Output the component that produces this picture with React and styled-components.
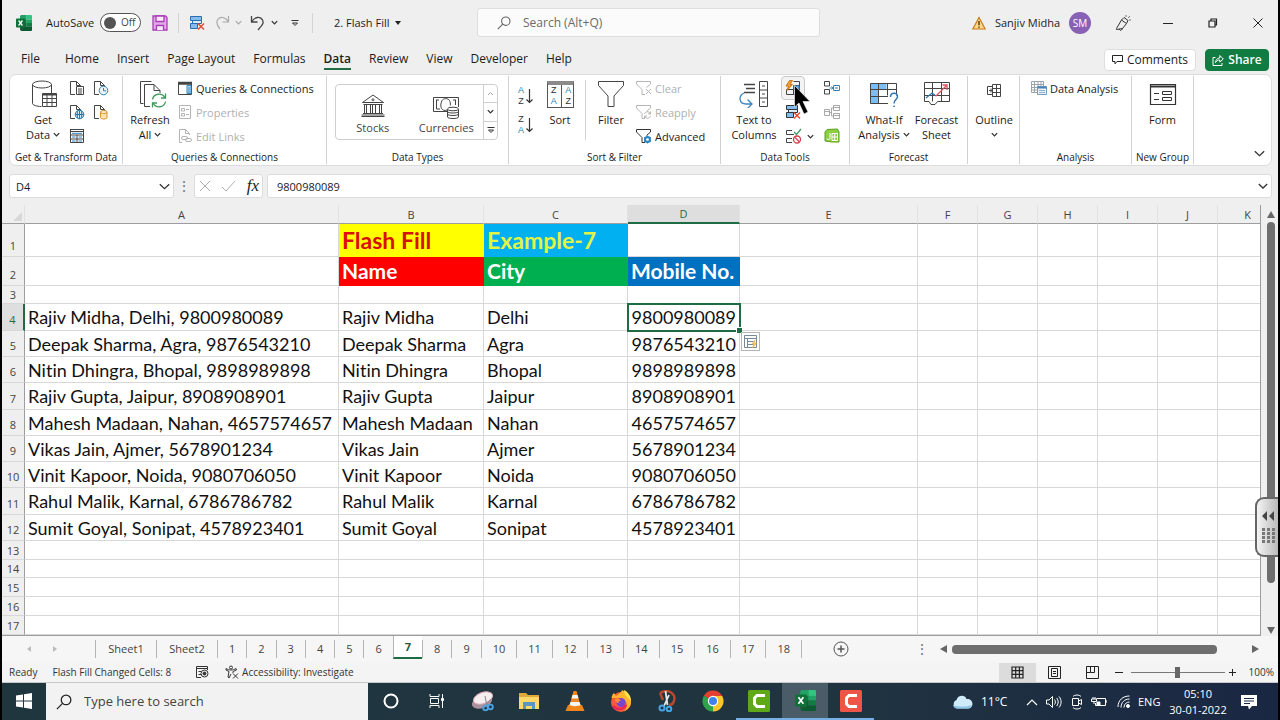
import * as React from "react";
import styled, { createGlobalStyle, css } from "styled-components";

const ui = `"Open Sans", "Noto Sans", sans-serif`;
const calc = `Lato, "Open Sans", sans-serif`;

//
// --- Data ---
const menuTabs = [
  "Home",
  "Insert",
  "Page Layout",
  "Formulas",
  "Data",
  "Review",
  "View",
  "Developer",
  "Help"
];

const columns = [
  { name: "A", width: 314 },
  { name: "B", width: 145 },
  { name: "C", width: 144 },
  { name: "D", width: 112 },
  { name: "E", width: 178 },
  { name: "F", width: 60 },
  { name: "G", width: 60 },
  { name: "H", width: 60 },
  { name: "I", width: 60 },
  { name: "J", width: 60 },
  { name: "K", width: 60 }
];

const rowHeights = [
  33, 29, 18, 27, 26, 26, 27, 26, 26, 26, 27, 26, 19, 18, 19, 19, 19
];

const people = [
  ["Rajiv Midha", "Delhi", "9800980089"],
  ["Deepak Sharma", "Agra", "9876543210"],
  ["Nitin Dhingra", "Bhopal", "9898989898"],
  ["Rajiv Gupta", "Jaipur", "8908908901"],
  ["Mahesh Madaan", "Nahan", "4657574657"],
  ["Vikas Jain", "Ajmer", "5678901234"],
  ["Vinit Kapoor", "Noida", "9080706050"],
  ["Rahul Malik", "Karnal", "6786786782"],
  ["Sumit Goyal", "Sonipat", "4578923401"]
];

const cells = {
  B1: { text: "Flash Fill", fill: "#ffff00", color: "#d8100c", size: 23 },
  C1: { text: "Example-7", fill: "#00b0f0", color: "#e4f442", size: 23 },
  B2: { text: "Name", fill: "#ff0000", color: "#ffffff", size: 21 },
  C2: { text: "City", fill: "#00b050", color: "#ffffff", size: 21 },
  D2: { text: "Mobile No.", fill: "#0070c0", color: "#ffffff", size: 21 }
};
people.forEach(([name, city, mobile], i) => {
  const row = i + 4;
  cells[`A${row}`] = { text: `${name}, ${city}, ${mobile}` };
  cells[`B${row}`] = { text: name };
  cells[`C${row}`] = { text: city };
  cells[`D${row}`] = { text: mobile, right: true };
});

const sheets = ["Sheet1", "Sheet2"].concat(
  Array.from({ length: 18 }, (_, i) => String(i + 1))
);

//
// --- Global ---
const GlobalStyle = createGlobalStyle`
  * { box-sizing: border-box; }
  body { margin: 0; background: #000; }
  button, input {
    margin: 0;
    padding: 0;
    border: 0;
    background: none;
    color: inherit;
    font: inherit;
  }
  svg { display: block; flex: none; }
`;

const StyledApp = styled.div`
  display: flex;
  flex-direction: column;
  min-height: 100vh;
  border: solid #000;
  border-width: 0 2px;
  background: #efefef;
  color: #1c1c1c;
  font: 11px/15px ${ui};
  white-space: nowrap;
`;

//
// --- Icons ---
const Svg = ({ w = 16, h = 16, color = "#444", sw = 1, children }) => (
  <svg
    width={w}
    height={h}
    viewBox={`0 0 ${w} ${h}`}
    fill="none"
    stroke={color}
    strokeWidth={sw}
    aria-hidden="true"
  >
    {children}
  </svg>
);

const Chevron = ({ w = 7, color = "#333", sw = 1.3 }) => (
  <Svg w={w} h={w} color={color} sw={sw}>
    <path d={`M.8 ${w * 0.3}L${w / 2} ${w * 0.7}L${w - 0.8} ${w * 0.3}`} />
  </Svg>
);

const ExcelLogo = ({ size = 16 }) => (
  <svg width={size} height={size} viewBox="0 0 16 16" aria-hidden="true">
    <path d="M5 0h5.5v8H4V1z" fill="#21a366" />
    <path d="M10.300 0H15a1 1 0 0 1 1 1v3.500h-5.700z" fill="#33c481" />
    <path d="M4 4.500h6.300V8H4z" fill="#107c41" />
    <path d="M10.300 4.500H16V8h-5.700z" fill="#21a366" />
    <path d="M4 8h6.300v7.500H5a1 1 0 0 1-1-1z" fill="#185c37" />
    <path d="M10.300 8H16v3.800h-5.700z" fill="#107c41" />
    <path d="M10.300 11.800H16V15a1 1 0 0 1-1 1H4.500z" fill="#0c5a31" />
    <rect y="3.500" width="9" height="9" rx=".8" fill="#0f7038" />
    <path d="M2.600 5.500l3.800 5M6.400 5.500l-3.800 5" stroke="#fff" strokeWidth="1.300" />
  </svg>
);

const SearchIcon = ({ size = 14, color = "#666" }) => (
  <svg
    width={size}
    height={size}
    viewBox="0 0 14 14"
    fill="none"
    stroke={color}
    strokeWidth="1.100"
    aria-hidden="true"
  >
    <circle cx="8.800" cy="5.200" r="4.200" />
    <path d="M5.700 8.200L.8 13.200" />
  </svg>
);

const SaveIcon = () => (
  <Svg color="#a83fb5" sw={1.3}>
    <path d="M1 1h12.500L15 2.500V15H1z" fill="#e3a6ea" />
    <path d="M4 1h8v5.500H4zM4.500 15v-4.500h7V15" fill="#fbeafc" />
  </Svg>
);

const DeleteRowsIcon = ({ bar = "#2a6eb0" }) => (
  <Svg>
    <path d="M1.500 1.500h11v4h-11z" fill="#83bdf0" stroke={bar} />
    <path d="M3.500 5.500h9v3h-9z" fill="#d8ecfb" stroke={bar} />
    <path d="M1.500 8.500h7v5h-7z" fill="#83bdf0" stroke={bar} />
    <path d="M9 8.500l6 6M15 8.500l-6 6" stroke="#e0492f" strokeWidth="1.400" />
  </Svg>
);

const RedoIcon = () => (
  <Svg w={15} color="#aaa" sw={1.2}>
    <path d="M13.500 1v6h-6M13.200 6.500C10 1.500 5 1.500 2.800 4.500.8 7.500 2 10.500 5 14" />
  </Svg>
);

const UndoIcon = () => (
  <Svg w={15} color="#444" sw={1.3}>
    <path d="M1.500 1v6h6M1.800 6.500C5 1.500 10 1.500 12.200 4.500c2 3 .8 5-4.200 10.500" />
  </Svg>
);

const CustomizeIcon = () => (
  <Svg w={8} h={8} color="#333">
    <path d="M.5 1.500h7M1.500 4l2.500 2.500L6.500 4z" />
  </Svg>
);

const WarningIcon = () => (
  <Svg w={14} h={14} color="#c77b16" sw={1.2}>
    <path d="M7 1.500L13.200 13H.8z" fill="#ffd68a" />
    <path d="M7 5v4.200M7 10.500v1.300" stroke="#4d3305" strokeWidth="1.400" />
  </Svg>
);

const PenIcon = () => (
  <Svg w={16} color="#333">
    <path d="M1.500 13.500L6.500 5l5 3.500-4 5-6 1zM6.500 5L9 2.500l4 3-1.500 3M4 14l1.500 1.500L8 13.500" />
    <path d="M11 2V0M13 3l2-2M14 5h2" stroke="#777" />
  </Svg>
);

const CommentIcon = () => (
  <Svg w={11} h={11} color="#222">
    <path d="M.5 1.500h10v6H5L3 9.800V7.500H.5z" />
  </Svg>
);

const ShareIcon = () => (
  <Svg w={12} h={12} color="#fff">
    <path d="M3.500 3.500H1v8h9V9M3.500 8.500C4 5.500 5.500 4 7.800 4V1.500L11.300 5 7.800 8V6C6 6 4.500 6.800 3.500 8.500z" />
  </Svg>
);

const GetDataIcon = () => (
  <Svg w={32} h={28}>
    <g transform="translate(4)">
      <path d="M1.500 4.500v19c0 1.500 4 3 9 3M20.500 4.500v9" />
      <ellipse cx="11" cy="4.500" rx="9.500" ry="3.500" />
      <path d="M11.500 13.500h14v13h-14z" fill="#fff" />
      <path d="M11.500 14.500h14" strokeWidth="2" />
      <path d="M11.500 18.500h14M11.500 22.500h14M16 14v12.500M21 14v12.500" />
    </g>
  </Svg>
);

const FileIcon = ({ children }) => (
  <Svg>
    <path d="M6 14.500H1.500v-13h6l4 4V7M7.500 1.500v4h4" />
    {children}
  </Svg>
);

const TextFileIcon = () => (
  <FileIcon>
    <path d="M7.500 6.500h7v8h-7z" fill="#fff" />
    <path d="M9 9h4M9 11h4M9 13h4" />
  </FileIcon>
);

const RecentFileIcon = () => (
  <FileIcon>
    <circle cx="10.500" cy="10.500" r="4.300" fill="#e8f3fb" stroke="#2b83bf" />
    <path d="M10.500 8v2.800h2.500" stroke="#2b83bf" />
  </FileIcon>
);

const WebFileIcon = () => (
  <FileIcon>
    <circle cx="10.500" cy="10.500" r="4.300" fill="#cfe6f6" stroke="#1f78b8" />
    <path d="M6.300 10.500h8.400M10.500 6.200v8.600M8.300 7v7M12.700 7v7" stroke="#1f78b8" />
  </FileIcon>
);

const SourceFileIcon = () => (
  <FileIcon>
    <path d="M7.500 8v5.500c0 2 6.500 2 6.500 0V8" fill="#ffe3ae" stroke="#d9912a" />
    <ellipse cx="10.750" cy="8" rx="3.300" ry="1.500" fill="#fff1d6" stroke="#d9912a" />
  </FileIcon>
);

const TableIcon = () => (
  <Svg>
    <path d="M1 1.500h14M1 3.500h14" strokeWidth="1.200" />
    <path d="M1.500 1.500v13h13v-13M1.500 7h13M1.500 11h13M8 7v7.500" />
    <path d="M3 5.300h10M3 9h3.500M9.500 9H13M3 13h3.500M9.500 13H13" stroke="#2f87c4" />
  </Svg>
);

const RefreshIcon = () => (
  <Svg w={34} h={28}>
    <g transform="translate(6)">
      <path d="M4.500 23.500h-3v-22h11M11 26.500H5.500v-22H15l6 6V13M15 4.500v6h6" />
      <g stroke="#3e9a5b" strokeWidth="1.300">
        <path d="M13.500 19.500c1-6 9.500-7.500 12.500-1.500M26.500 21.500c-1 6-9.500 7.500-12.500 1.500" />
        <path d="M26.500 13.500V18H22M13.500 27.500V23H18" />
      </g>
    </g>
  </Svg>
);

const QueriesIcon = () => (
  <Svg>
    <path d="M1.500 2.500h13v12h-13z" />
    <path d="M1 2.500h14M1 4h14" strokeWidth="1.500" />
    <path d="M10 5.500h4v8h-4z" fill="#bfdff5" stroke="#2f87c4" />
    <path d="M11 8h2M11 10h2M11 12h2" stroke="#2f87c4" />
  </Svg>
);

const PropertiesIcon = () => (
  <Svg color="#b5b5b5">
    <path d="M2.500 1.500h11v13h-11z" />
    <path d="M4.500 4.500h3v2.500h-3zM4.500 9.500h3V12h-3zM9 5.500h3M9 10.500h3" />
  </Svg>
);

const EditLinksIcon = () => (
  <Svg color="#b5b5b5">
    <path d="M5 14.500H2.500v-13h6l4 4V7M8.500 1.500v4h4" />
    <rect x="4.500" y="8.500" width="6" height="3" rx="1.500" />
    <rect x="8.500" y="10.500" width="6" height="3" rx="1.500" />
  </Svg>
);

const BankIcon = () => (
  <Svg w={26} h={26}>
    <path d="M2.500 9.500L13 2l10.500 7.500zM3.500 11.500h19M3 20.500h20M1.500 23.500h23M1.500 22h23" />
    <path d="M4.500 11.500v9M6.500 11.500v9M10.500 11.500v9M12.500 11.500v9M15.500 11.500v9M19.500 11.500v9M21.500 11.500v9" />
    <circle cx="13" cy="6.800" r="1" />
  </Svg>
);

const CurrencyIcon = () => (
  <Svg w={28} h={26}>
    <path d="M1.500 4.500h25V14M1.500 4.500v14H15M4 7h3M21 7h3M4.500 7v9H8M23.500 7v5" />
    <path d="M15 17c-5 2-8-3-5-9.500 1.500-2.500 6-2.500 7.500 0 .8 1.500 1 3 .8 5" />
    <path d="M15.500 16v8c0 2 11 2 11 0v-8" fill="#fff" />
    <ellipse cx="21" cy="16" rx="5.500" ry="1.800" fill="#fff" />
    <path d="M15.500 18.500c0 2 11 2 11 0M15.500 21c0 2 11 2 11 0" />
  </Svg>
);

const StyledLetters = styled.span`
  display: flex;
  flex-direction: column;
  color: #333;
  font: 9px/11px "Liberation Sans", sans-serif;

  b {
    font-weight: 400;
    color: #2785ab;
  }
`;

const SortLetters = ({ down }) => (
  <>
    <StyledLetters>
      {down ? <span>Z</span> : <b>A</b>}
      {down ? <b>A</b> : <span>Z</span>}
    </StyledLetters>
    <Svg w={8} h={16} color="#333" sw={1.2}>
      <path d="M4.500 1v13.500M1.500 11.500l3 3 3-3" />
    </Svg>
  </>
);

const StyledSortBox = styled.span`
  display: grid;
  grid-template-columns: 1fr 1fr;
  width: 27px;
  height: 27px;
  border: 1px solid #555;
  border-top: 4px solid #8b8b8b;
  justify-items: center;
  align-items: center;

  ${StyledLetters} + ${StyledLetters} {
    border-left: 1px solid #555;
    padding-left: 3px;
  }
`;

const FilterIcon = () => (
  <Svg w={28} h={28}>
    <path d="M1.500 1.500h25v4L17 16v10.500h-6V16L1.500 5.500z" />
  </Svg>
);

const SmallFilterIcon = ({ color = "#b5b5b5", children }) => (
  <Svg color={color}>
    <path d="M10.500 7.500l4-3.500V1.500h-14V4L6 9.500v5h3" />
    {children}
  </Svg>
);

const TextToColumnsIcon = () => (
  <Svg w={30} h={28}>
    <path d="M5 4.500h11M7 8.500h9M5 12.500h11" strokeWidth="1.300" />
    <path d="M20.500 1.500h8v25h-8zM20.500 10h8M20.500 18h8M23 6h3M23 14h3M23 22h3" />
    <path d="M5 13c-6 3-5 11 2 11h5M8.500 19.500l4.500 4.500-4.500 4.500" stroke="#3b86c4" strokeWidth="1.300" />
  </Svg>
);

const FlashFillIcon = () => (
  <Svg>
    <path d="M8.500 1.500h6v13h-13v-5M1.500 9.500h13M8.500 5.500v9M8.500 5.500h6" />
    <path d="M9 6h5v3H9z" fill="#72b2ea" stroke="#2f87c4" />
    <path d="M4.500.5L1 6h2.500L2 10.500 7.500 4.500H5L7.500.5z" fill="#f0a13c" stroke="#d07512" />
  </Svg>
);

const ValidationIcon = () => (
  <Svg w={17}>
    <path d="M7 2.500H1.500v4H9M7 10.500H1.500v4H7" />
    <path d="M9 4l2.500 2.500L16 1" stroke="#3e9a5b" strokeWidth="1.200" />
    <circle cx="12" cy="11.500" r="3.500" stroke="#d6404d" strokeWidth="1.300" />
    <path d="M9.500 9l5 5" stroke="#d6404d" strokeWidth="1.300" />
  </Svg>
);

const ConsolidateIcon = () => (
  <Svg>
    <path d="M.5 1.500h5v4.500h-5zM.5 9.500h5V14h-5z" />
    <path d="M5.500 8H9M7.500 6.500L9 8 7.500 9.500" stroke="#2f87c4" />
    <path d="M9.500 5.500h6v5h-6zM11 8h3" stroke="#2f87c4" />
  </Svg>
);

const RelationsIcon = () => (
  <Svg color="#a8a8a8">
    <path d="M.5 5.500h5v6h-5zM9.500 1.500h6v5h-6zM9.500 9.500h6v5h-6zM5.500 8.500h2M7.500 4v8M7.500 4h2M7.500 12h2M9.500 3.500h6M9.500 11.500h6M.5 7.500h5" />
  </Svg>
);

const DataModelIcon = () => (
  <Svg>
    <path d="M3 1.500L13.500 1 15 4v10H8L1 13V4z" fill="#8bcf45" stroke="#5f9e22" />
    <path d="M6 5v5c0 2-3 2-3 .5M8 5.500h5.500v7H8zM8 9h5.500M10.700 5.500v7" stroke="#fff" />
  </Svg>
);

const WhatIfIcon = () => (
  <Svg w={30} h={28}>
    <path d="M1.500 3.500h8v20h-8zM9.500 3.500h8v6h-8z" fill="#7ebdf2" stroke="none" />
    <path d="M1.500 3.500h26v12M1.500 3.500v20H19M1.500 9.500h26M1.500 16.500H19M9.500 3.500v20M18.500 3.500v12" />
    <path d="M21.500 17c0-5 7-5 7-.5 0 3-3.500 3-3.500 7M25 25.500v1.500" stroke="#2f78b8" strokeWidth="1.500" />
  </Svg>
);

const ForecastIcon = () => (
  <Svg w={28} h={28}>
    <path d="M1.500 2.500h25v19h-12l-2.500 3h-4l-2-3H1.500zM1.500 8.500h25M1.500 15.500h25M9.500 2.500v19M18.500 2.500v19" />
    <path d="M3 18l6-5 4 3" stroke="#2f78b8" strokeWidth="1.300" />
    <path d="M13 16l11-11M19.500 5H24v5" stroke="#dc5361" strokeWidth="1.300" />
  </Svg>
);

const OutlineIcon = () => (
  <Svg h={24}>
    <path d="M6.500 2.500h8v12h-8zM6.500 6.500h8M6.500 10.500h8M10.500 2.500v12M6 4.500H1.500v8H6M3 8.500h4M5 6.500v4" />
  </Svg>
);

const DataAnalysisIcon = () => (
  <Svg color="#9aa4ad">
    <path d="M.5 1.500h12v11H.5zM.5 4.500h12M.5 7.500h12M.5 10h12M3.500 1.500v11M7 1.500v11M10 1.500v11" />
    <path d="M6.500 6.500h9v8h-9z" fill="#e9f2fa" stroke="#6f9dc4" />
    <path d="M6.500 7.500h9" stroke="#4d83b3" strokeWidth="2" />
    <path d="M8 10.500h6M8 12.500h6" stroke="#8eb3d2" />
  </Svg>
);

const FormIcon = () => (
  <Svg w={28} h={24} color="#333">
    <path d="M1.500 2.500h25v20h-25z" strokeWidth="1.200" />
    <path d="M1 4.500h26" strokeWidth="2" />
    <path d="M5 11.500h5M5 17.500h5M13.500 9.500h9v3h-9zM13.500 15.500h9v3h-9z" />
  </Svg>
);

//
// --- Title bar ---
const StyledTitleBar = styled.header`
  display: flex;
  align-items: center;
  height: 45px;
`;

const StyledTitleLeft = styled.div`
  display: flex;
  align-items: center;
  flex: 0 0 475px;
  padding-left: 14px;
`;

const StyledTitleRight = styled.div`
  display: flex;
  flex: 1;
  align-items: center;
  justify-content: flex-end;
`;

const StyledSlot = styled.div`
  width: ${props => props.$width}px;
`;

const StyledIconButton = styled.button`
  display: flex;
  align-items: center;
  justify-content: center;
  width: ${props => props.$width || 24}px;
  height: ${props => props.$height || 24}px;
`;

const StyledRule = styled.span`
  width: 1px;
  height: ${props => props.$height}px;
  background: #d4d4d4;
`;

const StyledToggle = styled.label`
  display: flex;
  align-items: center;

  span {
    width: 54px;
  }
`;

const StyledToggleBox = styled.input`
  appearance: none;
  display: flex;
  align-items: center;
  gap: 5px;
  width: 41px;
  height: 19px;
  padding: 0 3px;
  border: 1px solid #555;
  border-radius: 10px;
  background: #fff;

  &::before {
    content: "";
    width: 12px;
    height: 12px;
    border-radius: 50%;
    background: #555;
  }

  &::after {
    content: "Off";
    font-size: 10px;
    color: #444;
  }
`;

const StyledDocTitle = styled.button`
  display: flex;
  align-items: center;
  gap: 6px;
  padding-left: 21px;
  font-size: 11px;
`;

const StyledSearch = styled.label`
  display: flex;
  align-items: center;
  gap: 12px;
  flex: 0 1 343px;
  height: 29px;
  padding: 0 19px;
  border: 1px solid #dedede;
  border-radius: 3px;
  background: #fbfbfb;

  input {
    flex: 1;
    min-width: 0;
    font-size: 12px;
    outline: 0;
  }

  input::placeholder {
    color: #6a6a6a;
    opacity: 1;
  }
`;

const StyledUser = styled.button`
  display: flex;
  align-items: center;
  gap: 9px;
`;

const StyledAvatar = styled.span`
  width: 22px;
  height: 22px;
  border-radius: 50%;
  background: #8661b5;
  color: #fff;
  font-size: 10px;
  line-height: 22px;
  text-align: center;
`;

const StyledWindowButtons = styled.div`
  display: flex;
  gap: 5px;
  padding-left: 12px;
`;

const TitleBar = () => (
  <StyledTitleBar>
    <StyledTitleLeft>
      <StyledSlot $width={30}>
        <ExcelLogo />
      </StyledSlot>
      <StyledToggle>
        <span>AutoSave</span>
        <StyledToggleBox type="checkbox" />
      </StyledToggle>
      <StyledIconButton $width={37} aria-label="Save">
        <SaveIcon />
      </StyledIconButton>
      <StyledRule $height={20} />
      <StyledIconButton $width={35} aria-label="Delete rows">
        <DeleteRowsIcon />
      </StyledIconButton>
      <StyledIconButton $width={17} aria-label="Redo">
        <RedoIcon />
      </StyledIconButton>
      <StyledIconButton $width={14} aria-label="Redo list">
        <Chevron color="#aaa" />
      </StyledIconButton>
      <StyledIconButton $width={25} aria-label="Undo">
        <UndoIcon />
      </StyledIconButton>
      <StyledIconButton $width={8} aria-label="Undo list">
        <Chevron />
      </StyledIconButton>
      <StyledIconButton $width={34} aria-label="Customize toolbar">
        <CustomizeIcon />
      </StyledIconButton>
      <StyledRule $height={20} />
      <StyledDocTitle>
        2. Flash Fill
        <Svg w={6} h={4}>
          <path d="M0 0h6L3 4z" fill="#222" stroke="none" />
        </Svg>
      </StyledDocTitle>
    </StyledTitleLeft>
    <StyledSearch>
      <SearchIcon />
      <input type="search" placeholder="Search (Alt+Q)" aria-label="Search" />
    </StyledSearch>
    <StyledTitleRight>
      <StyledUser>
        <WarningIcon />
        Sanjiv Midha
        <StyledAvatar>SM</StyledAvatar>
      </StyledUser>
      <StyledWindowButtons>
        <StyledIconButton $width={40} aria-label="Coming soon">
          <PenIcon />
        </StyledIconButton>
        <StyledIconButton $width={40} aria-label="Minimize">
          <Svg w={10} h={10} color="#222">
            <path d="M0 5.500h10" />
          </Svg>
        </StyledIconButton>
        <StyledIconButton $width={40} aria-label="Restore">
          <Svg w={10} h={10} color="#222" sw={1.2}>
            <path d="M1 3h6v6H1zM3 3V1h5.500v6H7" />
          </Svg>
        </StyledIconButton>
        <StyledIconButton $width={40} aria-label="Close">
          <Svg w={10} h={10} color="#222">
            <path d="M.5.5l9 9M9.500.5l-9 9" />
          </Svg>
        </StyledIconButton>
      </StyledWindowButtons>
    </StyledTitleRight>
  </StyledTitleBar>
);

//
// --- Menu tabs ---
const StyledMenu = styled.nav`
  display: flex;
  align-items: center;
  height: 29px;
  padding: 0 9px 0 10px;
  font-size: 12px;
`;

const StyledMenuTab = styled.button`
  height: 21px;
  margin: 0 9px;
  border-bottom: 2px solid ${props => (props.$active ? "#1e6b44" : "transparent")};
  font-weight: ${props => (props.$active ? 600 : 400)};
  line-height: 19px;
`;

const StyledFileTab = styled(StyledMenuTab)`
  margin-right: 16px;
`;

const StyledSpacer = styled.div`
  flex: 1;
`;

const StyledPill = styled.button`
  display: flex;
  align-items: center;
  justify-content: center;
  gap: 4px;
  height: 22px;
  min-width: ${props => (props.$green ? 64 : 92)}px;
  margin-left: 9px;
  border: 1px solid ${props => (props.$green ? "#107c41" : "#dedede")};
  border-radius: 4px;
  background: ${props => (props.$green ? "#107c41" : "#fff")};
  color: ${props => (props.$green ? "#fff" : "#1c1c1c")};
  font-weight: ${props => (props.$green ? 600 : 400)};
`;

const Menu = () => (
  <StyledMenu>
    <StyledFileTab>File</StyledFileTab>
    {menuTabs.map(tab => (
      <StyledMenuTab key={tab} $active={tab === "Data"}>
        {tab}
      </StyledMenuTab>
    ))}
    <StyledSpacer />
    <StyledPill>
      <CommentIcon />
      Comments
    </StyledPill>
    <StyledPill $green>
      <ShareIcon />
      Share
    </StyledPill>
  </StyledMenu>
);

//
// --- Ribbon ---
const StyledRibbon = styled.section`
  display: flex;
  height: 92px;
  margin: 0 6px 0 7px;
  padding-top: 1px;
  border: 1px solid #dcdcdc;
  border-radius: 7px;
  background: #fff;
`;

const StyledGroup = styled.div`
  display: flex;
  flex-direction: column;
  flex: 0 0 ${props => props.$width}px;
  height: 88px;
  border-right: 1px solid #d2d2d2;
`;

const StyledGroupBody = styled.div`
  display: flex;
  flex: 1;
  padding-left: ${props => props.$left || 0}px;
`;

const StyledCaption = styled.div`
  font-size: 10px;
  font-weight: 500;
  line-height: 14px;
  text-align: center;
`;

const StyledBigButton = styled.button`
  display: flex;
  flex-direction: column;
  align-items: center;
  align-self: flex-start;
  width: ${props => props.$width}px;
  padding-top: 4px;
  line-height: 15px;
`;

const StyledBigIcon = styled.span`
  display: flex;
  align-items: center;
  height: 28px;
  margin-bottom: 4px;
`;

const StyledLine = styled.span`
  display: flex;
  align-items: center;
  gap: 3px;
`;

const StyledList = styled.div`
  display: flex;
  flex-direction: column;
  padding-left: ${props => props.$left}px;
`;

const StyledListButton = styled.button`
  display: flex;
  align-items: center;
  gap: 3px;
  height: 24px;
  color: ${props => (props.$muted ? "#b0b0b0" : "#1c1c1c")};
`;

const StyledIconGrid = styled.div`
  display: grid;
  grid-template-columns: ${props => props.$columns};
  grid-auto-rows: 24px;
  align-items: center;
  justify-items: center;
`;

const StyledGallery = styled.div`
  display: flex;
  width: 163px;
  height: 56px;
  margin: 8px 0 0 8px;
  border: 1px solid #cfcfcf;
  border-radius: 4px;
  color: #444;
`;

const StyledGalleryItem = styled.button`
  display: flex;
  flex: 1;
  flex-direction: column;
  align-items: center;
  gap: 1px;
  padding-top: 8px;
`;

const StyledGallerySide = styled.div`
  display: flex;
  flex-direction: column;
  border-left: 1px solid #cfcfcf;

  button {
    display: flex;
    flex: 1;
    align-items: center;
    justify-content: center;
    width: 13px;
  }

  button + button {
    border-top: 1px solid #cfcfcf;
  }
`;

const StyledSortColumn = styled.div`
  display: flex;
  flex-direction: column;
  padding-top: 5px;
`;

const StyledSortButton = styled.button`
  display: flex;
  align-items: center;
  gap: 1px;
  width: 20px;
  height: 29px;
`;

const StyledDivider = styled.span`
  width: 1px;
  height: 60px;
  margin: 4px 2px 0 3px;
  background: #d2d2d2;
`;

const StyledFlashFill = styled(StyledIconButton)`
  position: relative;
  border: 1px solid #c9c9c9;
  border-radius: 4px;
  background: #f3f3f3;
`;

const StyledPointer = styled.span`
  position: absolute;
  z-index: 2;
  left: 12px;
  top: 8px;
`;

const StyledOutlineArrow = styled.span`
  padding-top: 4px;
`;

const StyledRibbonEnd = styled.div`
  display: flex;
  flex: 1;
  align-items: flex-end;
  justify-content: flex-end;
  padding: 0 6px 6px 0;
`;

const BigButton = ({ width, icon, lines, arrow }) => (
  <StyledBigButton $width={width}>
    <StyledBigIcon>{icon}</StyledBigIcon>
    {lines.map((line, i) => (
      <StyledLine key={line}>
        {line}
        {arrow && i === lines.length - 1 && <Chevron />}
      </StyledLine>
    ))}
  </StyledBigButton>
);

const Group = ({ width, left, caption, children }) => (
  <StyledGroup $width={width}>
    <StyledGroupBody $left={left}>{children}</StyledGroupBody>
    <StyledCaption>{caption}</StyledCaption>
  </StyledGroup>
);

const GridButton = ({ label, children }) => (
  <StyledIconButton aria-label={label}>{children}</StyledIconButton>
);

const Ribbon = () => (
  <StyledRibbon>
    <Group width={113} left={11} caption="Get & Transform Data">
      <BigButton width={44} icon={<GetDataIcon />} lines={["Get", "Data"]} arrow />
      <StyledIconGrid $columns="24px 24px">
        <GridButton label="From text"><TextFileIcon /></GridButton>
        <GridButton label="Recent sources"><RecentFileIcon /></GridButton>
        <GridButton label="From web"><WebFileIcon /></GridButton>
        <GridButton label="Existing connections"><SourceFileIcon /></GridButton>
        <GridButton label="From table"><TableIcon /></GridButton>
      </StyledIconGrid>
    </Group>
    <Group width={204} left={4} caption="Queries & Connections">
      <BigButton width={46} icon={<RefreshIcon />} lines={["Refresh", "All"]} arrow />
      <StyledList $left={4}>
        <StyledListButton><QueriesIcon />Queries & Connections</StyledListButton>
        <StyledListButton $muted><PropertiesIcon />Properties</StyledListButton>
        <StyledListButton $muted><EditLinksIcon />Edit Links</StyledListButton>
      </StyledList>
    </Group>
    <Group width={182} caption="Data Types">
      <StyledGallery>
        <StyledGalleryItem><BankIcon />Stocks</StyledGalleryItem>
        <StyledGalleryItem><CurrencyIcon />Currencies</StyledGalleryItem>
        <StyledGallerySide>
          <button aria-label="Previous">
            <Svg w={7} h={7} color="#aaa"><path d="M1 5l2.500-2.500L6 5" /></Svg>
          </button>
          <button aria-label="Next"><Chevron /></button>
          <button aria-label="More"><CustomizeIcon /></button>
        </StyledGallerySide>
      </StyledGallery>
    </Group>
    <Group width={212} left={9} caption="Sort & Filter">
      <StyledSortColumn>
        <StyledSortButton aria-label="Sort A to Z"><SortLetters /></StyledSortButton>
        <StyledSortButton aria-label="Sort Z to A"><SortLetters down /></StyledSortButton>
      </StyledSortColumn>
      <BigButton
        width={44}
        icon={
          <StyledSortBox>
            <StyledLetters><span>Z</span><b>A</b></StyledLetters>
            <StyledLetters><b>A</b><span>Z</span></StyledLetters>
          </StyledSortBox>
        }
        lines={["Sort"]}
      />
      <StyledDivider />
      <BigButton width={46} icon={<FilterIcon />} lines={["Filter"]} />
      <StyledList $left={2}>
        <StyledListButton $muted>
          <SmallFilterIcon><path d="M10 9l5 5M15 9l-5 5" /></SmallFilterIcon>
          Clear
        </StyledListButton>
        <StyledListButton $muted>
          <SmallFilterIcon>
            <path d="M8.500 10c1-3 5-3 6 0M14.500 7.500V10H12M14.500 12c-1 3-5 3-6 0M8.500 14.500V12H11" />
          </SmallFilterIcon>
          Reapply
        </StyledListButton>
        <StyledListButton>
          <SmallFilterIcon color="#333">
            <circle cx="11.500" cy="11.500" r="2.500" stroke="#2785c4" strokeWidth="2" />
            <path d="M11.500 7.500v8M8 9.500l7 4M15 9.500l-7 4" stroke="#2785c4" />
            <circle cx="11.500" cy="11.500" r="1.200" fill="#fff" stroke="none" />
          </SmallFilterIcon>
          Advanced
        </StyledListButton>
      </StyledList>
    </Group>
    <Group width={129} left={6} caption="Data Tools">
      <BigButton width={54} icon={<TextToColumnsIcon />} lines={["Text to", "Columns"]} />
      <StyledIconGrid $columns="24px 10px 34px">
        <StyledFlashFill aria-label="Flash Fill">
          <FlashFillIcon />
          <StyledPointer>
            <Svg w={18} h={30}>
              <path d="M.5.5v21.500l4.500-4 5 11 4-2-5-10.500h7z" fill="#000" stroke="#fff" strokeWidth=".6" />
            </Svg>
          </StyledPointer>
        </StyledFlashFill>
        <span />
        <GridButton label="Consolidate"><ConsolidateIcon /></GridButton>
        <GridButton label="Remove duplicates"><DeleteRowsIcon bar="#333" /></GridButton>
        <span />
        <GridButton label="Relationships"><RelationsIcon /></GridButton>
        <GridButton label="Data validation"><ValidationIcon /></GridButton>
        <Chevron />
        <GridButton label="Data model"><DataModelIcon /></GridButton>
      </StyledIconGrid>
    </Group>
    <Group width={118} left={8} caption="Forecast">
      <BigButton width={52} icon={<WhatIfIcon />} lines={["What-If", "Analysis"]} arrow />
      <BigButton width={53} icon={<ForecastIcon />} lines={["Forecast", "Sheet"]} />
    </Group>
    <Group width={52} left={2}>
      <StyledBigButton $width={48}>
        <StyledBigIcon><OutlineIcon /></StyledBigIcon>
        Outline
        <StyledOutlineArrow><Chevron /></StyledOutlineArrow>
      </StyledBigButton>
    </Group>
    <Group width={112} left={11} caption="Analysis">
      <StyledListButton><DataAnalysisIcon />Data Analysis</StyledListButton>
    </Group>
    <Group width={62} caption="New Group">
      <BigButton width={61} icon={<FormIcon />} lines={["Form"]} />
    </Group>
    <StyledRibbonEnd>
      <button aria-label="Collapse ribbon"><Chevron w={11} /></button>
    </StyledRibbonEnd>
  </StyledRibbon>
);

//
// --- Formula bar ---
const StyledFormulaBar = styled.div`
  display: flex;
  height: 39px;
  padding: 8px 6px 7px 7px;
`;

const StyledBox = styled.div`
  display: flex;
  align-items: center;
  justify-content: space-between;
  flex: ${props => (props.$width ? `0 0 ${props.$width}px` : 1)};
  padding: 0 3px 0 ${props => props.$left}px;
  border: 1px solid #dcdcdc;
  border-radius: 3px;
  background: #fff;

  input {
    flex: 1;
    min-width: 0;
    outline: 0;
  }
`;

const StyledDots = styled.span`
  width: 20px;
  color: #777;
  font-size: 14px;
  line-height: 24px;
  text-align: center;
`;

const StyledFx = styled.span`
  color: #222;
  font: italic 17px/20px "Liberation Serif", serif;
`;

const StyledGap = styled.span`
  width: 4px;
`;

const FormulaBar = () => (
  <StyledFormulaBar>
    <StyledBox $width={165} $left={6}>
      <input aria-label="Name box" defaultValue="D4" />
      <button aria-label="Names"><Chevron w={11} /></button>
    </StyledBox>
    <StyledDots>⋮</StyledDots>
    <StyledBox $width={69} $left={4}>
      <button aria-label="Cancel">
        <Svg w={12} h={12} color="#b0b0b0"><path d="M1 1l10 10M11 1L1 11" /></Svg>
      </button>
      <button aria-label="Enter">
        <Svg w={15} h={12} color="#b0b0b0"><path d="M1 7l4 4L14 1" /></Svg>
      </button>
      <StyledFx>fx</StyledFx>
    </StyledBox>
    <StyledGap />
    <StyledBox $left={9}>
      <input aria-label="Formula" defaultValue="9800980089" />
      <button aria-label="Expand formula bar"><Chevron w={10} /></button>
    </StyledBox>
  </StyledFormulaBar>
);

//
// --- Worksheet ---
const StyledWorkspace = styled.main`
  display: flex;
  flex: 1;
`;

const StyledGrid = styled.div`
  flex: 1 1 0;
  min-width: 0;
  overflow: hidden;
  border-right: 1px solid #9d9d9d;
  border-bottom: 1px solid #9d9d9d;
`;

const StyledTable = styled.table`
  table-layout: fixed;
  width: 1px;
  min-width: ${props => props.$width}px;
  border-spacing: 0;
  background: #fff;
`;

const selectedHead = css`
  background: #dedede;
  color: #1e6b44;
`;

const StyledColHead = styled.th`
  height: 19px;
  padding: 0;
  border-right: 1px solid #e2e2e2;
  border-bottom: 1px solid #9d9d9d;
  background: #efefef;
  color: #444;
  font-weight: 400;
  line-height: 17px;
  ${props => props.$selected && selectedHead}
  ${props => props.$selected && "border-bottom: 2px solid #1e6b44;"}
`;

const StyledCorner = styled(StyledColHead)`
  svg {
    margin: 4px 0 0 11px;
  }
`;

const StyledRowHead = styled.th`
  height: ${props => props.$height}px;
  padding: 0;
  border-right: 1px solid #9d9d9d;
  border-bottom: 1px solid #d8d8d8;
  background: #efefef;
  color: #444;
  font-weight: 400;
  line-height: 17px;
  vertical-align: bottom;
  ${props => props.$height > 20 && "padding-bottom: 2px;"}
  ${props => props.$selected && selectedHead}
  ${props => props.$selected && "border-right: 2px solid #1e6b44;"}
`;

const StyledCell = styled.td`
  position: relative;
  padding: 0 3px;
  border-right: 1px solid #d8d8d8;
  border-bottom: 1px solid #d8d8d8;
  color: #111;
  font-family: ${calc};
  font-size: 18px;
  font-variant-ligatures: none;
  line-height: 16px;
  text-align: ${props => (props.$right ? "right" : "left")};
  ${props =>
    props.$fill &&
    css`
      background: ${props.$fill};
      border-color: ${props.$fill};
      color: ${props.$color};
      font-size: ${props.$size}px;
      font-weight: 700;
    `}
  ${props =>
    props.$selected &&
    css`
      z-index: 1;
      border-color: #1e6b44;
      box-shadow: 0 0 0 1px #1e6b44, inset 1px 1px 0 #1e6b44;
    `}
`;

const StyledHandle = styled.span`
  position: absolute;
  right: -3px;
  bottom: -3px;
  width: 6px;
  height: 6px;
  border: solid #fff;
  border-width: 1px 0 0 1px;
  background: #1e6b44;
`;

const StyledOptions = styled.button`
  position: absolute;
  left: 100%;
  top: 100%;
  margin: 2px;
  padding: 1px;
  border: 1px solid #b5b5b5;
  background: #fff;
`;

const StyledScrollRail = styled.div`
  display: flex;
  flex-direction: column;
  align-items: center;
  flex: 0 0 17px;
  padding: 6px 0 2px 3px;
  gap: 3px;
`;

const StyledThumb = styled.div`
  border-radius: 4px;
  background: #6e6e6e;
  ${props => (props.$vertical ? "flex: 0 0 361px; width: 8px;" : "flex: 1; height: 9px;")}
`;

const Arrow = ({ d }) => (
  <Svg w={8} h={8}>
    <path d={d} fill="#666" stroke="none" />
  </Svg>
);

const Worksheet = () => (
  <StyledWorkspace>
    <StyledGrid>
      <StyledTable $width={1276}>
        <colgroup>
          <col width={23} />
          {columns.map(col => (
            <col key={col.name} width={col.width} />
          ))}
        </colgroup>
        <thead>
          <tr>
            <StyledCorner>
              <Svg w={9} h={9}>
                <path d="M9 0v9H0z" fill="#d8d8d8" stroke="none" />
              </Svg>
            </StyledCorner>
            {columns.map(col => (
              <StyledColHead key={col.name} $selected={col.name === "D"}>
                {col.name}
              </StyledColHead>
            ))}
          </tr>
        </thead>
        <tbody>
          {rowHeights.map((height, i) => {
            const row = i + 1;
            return (
              <tr key={row}>
                <StyledRowHead $height={height} $selected={row === 4}>
                  {row}
                </StyledRowHead>
                {columns.map(({ name }) => {
                  const cell = cells[name + row] || {};
                  const selected = name + row === "D4";
                  return (
                    <StyledCell
                      key={name}
                      $fill={cell.fill}
                      $color={cell.color}
                      $size={cell.size}
                      $right={cell.right}
                      $selected={selected}
                    >
                      {cell.text}
                      {selected && <StyledHandle />}
                      {selected && (
                        <StyledOptions aria-label="Flash Fill options">
                          <Svg w={15} h={15} color="#789">
                            <path d="M1.500 1.500h12v12h-12zM1.500 4.500h12M4.500 4.500v9M4.500 7.500h6M4.500 10.500h6" />
                            <path d="M12 6l-3 4h2l-1.500 4 4-5h-2z" fill="#ffd27a" stroke="#e0a93c" strokeWidth=".6" />
                          </Svg>
                        </StyledOptions>
                      )}
                    </StyledCell>
                  );
                })}
              </tr>
            );
          })}
        </tbody>
      </StyledTable>
    </StyledGrid>
    <StyledScrollRail>
      <Arrow d="M4 0l4 7H0z" />
      <StyledThumb $vertical />
      <StyledSpacer />
      <Arrow d="M4 8L0 1h8z" />
    </StyledScrollRail>
  </StyledWorkspace>
);

//
// --- Sheet tabs ---
const StyledSheetBar = styled.div`
  display: flex;
  align-items: center;
  height: 26px;
  background: #f6f6f6;
`;

const StyledSheetNav = styled.div`
  display: flex;
  gap: 20px;
  flex: 0 0 93px;
  padding-left: 23px;
`;

const StyledSheetTab = styled.button`
  height: 18px;
  min-width: ${props => (props.$wide ? 61 : 29)}px;
  padding: 0 11px;
  border-left: 1px solid #b4b4b4;
  color: #444;
  line-height: 18px;
  ${props =>
    props.$active &&
    css`
      align-self: stretch;
      height: auto;
      margin-bottom: 3px;
      border-bottom: 2px solid #1e6b44;
      background: #fff;
      color: #1e5b3c;
      font-weight: 700;
    `}
`;

const StyledSheetEnd = styled.span`
  width: 32px;
  height: 18px;
  border-left: 1px solid #b4b4b4;
`;

const StyledHScroll = styled.div`
  display: flex;
  align-items: center;
  flex: 0 1 366px;
  padding-right: 19px;
`;

const StyledHGap = styled.span`
  width: ${props => props.$width}px;
`;

const SheetBar = () => (
  <StyledSheetBar>
    <StyledSheetNav>
      <Svg w={7} h={8}><path d="M6 1v6L2 4z" fill="#bbb" stroke="none" /></Svg>
      <Svg w={7} h={8}><path d="M1 1v6l4-3z" fill="#bbb" stroke="none" /></Svg>
    </StyledSheetNav>
    {sheets.map(name => (
      <StyledSheetTab key={name} $active={name === "7"} $wide={name.length > 2}>
        {name}
      </StyledSheetTab>
    ))}
    <StyledSheetEnd />
    <button aria-label="New sheet">
      <Svg color="#555">
        <circle cx="8" cy="8" r="7" />
        <path d="M4.500 8h7M8 4.500v7" strokeWidth="1.500" />
      </Svg>
    </button>
    <StyledSpacer />
    <StyledHScroll>
      <StyledDots>⋮</StyledDots>
      <StyledHGap $width={8} />
      <Arrow d="M0 4l7-4v8z" />
      <StyledHGap $width={4} />
      <StyledThumb />
      <StyledHGap $width={34} />
      <Arrow d="M8 4L1 0v8z" />
    </StyledHScroll>
  </StyledSheetBar>
);

//
// --- Status bar ---
const StyledStatusBar = styled.div`
  display: flex;
  align-items: center;
  height: 21px;
  padding: 0 4px 0 7px;
  border-bottom: 1px solid #c8c8c8;
  background: #f4f4f4;
  color: #333;
  font-size: 10px;
`;

const StyledStatusItem = styled.span`
  display: flex;
  align-items: center;
  gap: 3px;
  margin-right: ${props => props.$gap}px;
`;

const StyledViewButton = styled(StyledIconButton)`
  background: ${props => (props.$active ? "#dcdcdc" : "none")};
`;

const StyledZoom = styled.input`
  appearance: none;
  width: 94px;
  height: 12px;
  margin: 0 4px;
  background: linear-gradient(#777, #777) center / 100% 1px no-repeat;

  &::-webkit-slider-thumb {
    appearance: none;
    width: 5px;
    height: 11px;
    background: #666;
  }
`;

const StatusBar = () => (
  <StyledStatusBar>
    <StyledStatusItem $gap={15}>Ready</StyledStatusItem>
    <StyledStatusItem $gap={24}>Flash Fill Changed Cells: 8</StyledStatusItem>
    <StyledStatusItem $gap={16}>
      <Svg w={14} h={14} color="#333">
        <path d="M6 12.500H1.500v-11h11V5M1.500 3.500h11M3.500 6.500H6M3.500 9.500H6" />
        <circle cx="9.500" cy="8.500" r="3.500" />
        <circle cx="9.500" cy="8.500" r="1.500" fill="#333" />
      </Svg>
    </StyledStatusItem>
    <StyledStatusItem $gap={0}>
      <Svg w={14} h={14} color="#333">
        <circle cx="6" cy="2.500" r="1.500" />
        <path d="M1 3.500c3 2 7 2 10 0l.5 1.500-3.500 1.500v1.500M4 6.500L3 12l1 1 2-4M1 3.500L1 5l3 1.500M8 8.500l5 5M13 8.500l-5 5" />
      </Svg>
      Accessibility: Investigate
    </StyledStatusItem>
    <StyledSpacer />
    <StyledViewButton $width={37} $height={19} $active aria-label="Normal">
      <Svg w={13} h={13} color="#222" sw={1.2}>
        <path d="M1 1h11v11H1zM1 4.700h11M1 8.400h11M4.700 1v11M8.400 1v11" />
      </Svg>
    </StyledViewButton>
    <StyledViewButton $width={38} $height={19} aria-label="Page layout">
      <Svg w={13} h={13} color="#222">
        <path d="M.5.5h12v12H.5zM3.500 2.500h6v8h-6zM5 5.500h3M5 7.500h3" />
      </Svg>
    </StyledViewButton>
    <StyledViewButton $width={37} $height={19} aria-label="Page break preview">
      <Svg w={13} h={13} color="#222">
        <path d="M.5.5h12v12H.5zM4.500.5v6h4v-6M.5 6.500h4" />
      </Svg>
    </StyledViewButton>
    <StyledIconButton $width={16} $height={19} aria-label="Zoom out">
      <Svg w={8} h={8} color="#222"><path d="M0 4.500h8" /></Svg>
    </StyledIconButton>
    <StyledZoom type="range" min="0" max="200" defaultValue="100" aria-label="Zoom" />
    <StyledIconButton $width={8} $height={19} aria-label="Zoom in">
      <Svg w={7} h={7} color="#222"><path d="M0 3.500h7M3.500 0v7" /></Svg>
    </StyledIconButton>
    <StyledHGap $width={12} />
    100%
  </StyledStatusBar>
);

//
// --- Taskbar ---
const StyledTaskbar = styled.footer`
  display: flex;
  height: 37px;
  background: linear-gradient(90deg, #1f363e 0%, #203440 65%, #1a2743 100%);
  color: #fff;
`;

const StyledTask = styled.button`
  display: flex;
  align-items: center;
  justify-content: center;
  width: ${props => props.$width || 46}px;
  border-bottom: 2px solid ${props => (props.$open ? "#76b0e6" : "transparent")};
  background: ${props => (props.$active ? "#4b5c69" : "none")};
  background-clip: padding-box;
`;

const StyledTaskSearch = styled.label`
  display: flex;
  align-items: center;
  gap: 12px;
  flex: 0 1 322px;
  padding-left: 10px;
  background: #f2f2f2;
  color: #222;

  input {
    flex: 1;
    min-width: 0;
    font-size: 13px;
    outline: 0;
  }

  input::placeholder {
    color: #444;
    opacity: 1;
  }
`;

const StyledTray = styled.div`
  display: flex;
  align-items: center;
  padding-right: 14px;
`;

const StyledTrayText = styled.span`
  width: ${props => props.$width}px;
  font-size: ${props => props.$size}px;
  line-height: 16px;
  text-align: ${props => props.$align || "left"};
`;

const WindowsIcon = () => (
  <Svg w={16}>
    <path d="M0 2.500l7-1v6H0zM8 1.300L16 0v7.500H8zM0 8.500h7v6l-7-1zM8 8.500h8V16l-8-1.300z" fill="#fff" stroke="none" />
  </Svg>
);

const TaskViewIcon = () => (
  <Svg color="#fff">
    <path d="M1 1v2.500h9V1M1 15v-2.500h9V15M1.500 5.500h8v5h-8zM13.500 1v4M13.500 8v7" />
    <path d="M12.500 5.500h2v2h-2z" fill="#fff" />
  </Svg>
);

const SnipIcon = () => (
  <Svg w={24} h={22}>
    <ellipse cx="11" cy="12" rx="10.500" ry="6" fill="#a9929d" stroke="none" transform="rotate(-20 11 12)" />
    <ellipse cx="12" cy="8" rx="10" ry="5.500" fill="#f5eef0" stroke="#d8a8b4" transform="rotate(-20 12 8)" />
    <path d="M14 6l2 10M20 9l-6 7" stroke="#888" />
    <circle cx="14.500" cy="18" r="2.300" stroke="#4aa3e6" strokeWidth="1.800" />
    <circle cx="19.500" cy="17" r="2.300" stroke="#4aa3e6" strokeWidth="1.800" />
  </Svg>
);

const FolderIcon = () => (
  <Svg w={20} h={18}>
    <path d="M0 1h7l2 2h11v14H0z" fill="#e0a93a" stroke="none" />
    <path d="M0 5h20v12H0z" fill="#ffd868" stroke="none" />
    <path d="M4 17v-7h12v7h-3v-3H7v3z" fill="#5598c8" stroke="none" />
  </Svg>
);

const ConeIcon = () => (
  <Svg w={20} h={22}>
    <path d="M3 15h14l2.500 6H.5z" fill="#f08519" stroke="none" />
    <path d="M8.500 1h3L16 17c-2 2-10 2-12 0z" fill="#f08519" stroke="none" />
    <path d="M7.500 5h5l1 3.500h-7zM5.500 12h9l1 3c-2 1.500-9 1.500-11 0z" fill="#f4f4f4" stroke="none" />
  </Svg>
);

const FirefoxIcon = () => (
  <Svg w={22} h={22}>
    <circle cx="11" cy="12" r="10" fill="#fb5a36" stroke="none" />
    <path d="M1.500 8C2 5 3 4 4 3l2 3c3-2 6-5 6.500-6C16 3 21 6 21 12c0 5-4 8-7 9 5-5 3-10-2-13z" fill="#ffb52e" stroke="none" />
    <path d="M14 0c4 2 7 6 7 11l-4-4c-2-2-3-4-3-7z" fill="#ffe04d" stroke="none" />
    <circle cx="11" cy="12.500" r="4.500" fill="#7a45d0" stroke="none" />
    <path d="M5 9c3-1 5 0 6 1.500-2 0-3 1-2 2.500-3 0-4-2-4-4z" fill="#ff8a34" stroke="none" />
    <path d="M3 16c5 5 11 3 13-1" stroke="#e8255f" strokeWidth="2.500" />
  </Svg>
);

const ScissorsIcon = () => (
  <Svg w={22} h={22}>
    <path d="M4 3c9-5 16 1 14 8-1 3-3 4-5 4M4 3l3 7" stroke="#b8482c" strokeWidth="2.500" />
    <path d="M9.500 1l2 14M13 5l-5 11" stroke="#e6e6e6" strokeWidth="1.800" />
    <circle cx="6" cy="18" r="2.500" stroke="#4aa3e6" strokeWidth="2" />
    <circle cx="13" cy="19" r="2.300" stroke="#4aa3e6" strokeWidth="2" />
  </Svg>
);

const ChromeIcon = () => (
  <Svg w={22} h={22}>
    <g stroke="none">
      <path d="M11 11L1.900 5.700A10.500 10.500 0 0 1 20.100 5.700z" fill="#e5402f" />
      <path d="M11 11L20.100 5.700A10.500 10.500 0 0 1 11 21.500z" fill="#fbc52c" />
      <path d="M11 11v10.500A10.500 10.500 0 0 1 1.900 5.700z" fill="#2fa24c" />
      <path d="M11 6h9.200l-4.800 7.500z" fill="#fbc52c" />
      <path d="M11 6h9.200l-.6-1H6z" fill="#e5402f" />
      <circle cx="11" cy="11" r="5.200" fill="#fff" />
      <circle cx="11" cy="11" r="4" fill="#4081ec" />
    </g>
  </Svg>
);

const CamtasiaIcon = ({ color }) => (
  <Svg w={22} h={22}>
    <rect width="22" height="22" rx="1.500" fill={color} stroke="none" />
    <path d="M17 5.500H9L6.500 8v6L9 16.500h8" stroke="#fff" strokeWidth="3" />
  </Svg>
);

const tasks = [
  {
    name: "Cortana",
    icon: (
      <Svg color="#fff" sw={2}>
        <circle cx="8" cy="8" r="6.500" />
      </Svg>
    )
  },
  { name: "Task view", icon: <TaskViewIcon /> },
  { name: "Snip & Sketch", icon: <SnipIcon /> },
  { name: "File Explorer", icon: <FolderIcon /> },
  { name: "VLC", icon: <ConeIcon /> },
  { name: "Firefox", icon: <FirefoxIcon /> },
  { name: "Snipping Tool", icon: <ScissorsIcon /> },
  { name: "Chrome", icon: <ChromeIcon /> },
  { name: "Camtasia", icon: <CamtasiaIcon color="#5fa818" />, open: true },
  { name: "Excel", icon: <ExcelLogo size={21} />, open: true, active: true },
  { name: "Recorder", icon: <CamtasiaIcon color="#ee5547" />, open: true }
];

const Taskbar = () => (
  <StyledTaskbar>
    <StyledTask $width={44} aria-label="Start">
      <WindowsIcon />
    </StyledTask>
    <StyledTaskSearch>
      <SearchIcon size={16} color="#222" />
      <input type="search" placeholder="Type here to search" aria-label="Taskbar search" />
    </StyledTaskSearch>
    {tasks.map(task => (
      <StyledTask
        key={task.name}
        aria-label={task.name}
        $open={task.open}
        $active={task.active}
      >
        {task.icon}
      </StyledTask>
    ))}
    <StyledSpacer />
    <StyledTray>
      <Svg w={21} h={15}>
        <path d="M5 14.500a4.500 4.500 0 0 1-.5-8.500C5.500 1 13 0 14.500 5c3-.5 6 1.500 6 5 0 2.500-2 4.500-4.500 4.500z" fill="#cfeaf8" stroke="none" />
        <path d="M5 14.500a4.500 4.500 0 0 1-4-3.500c5 2 13 2 19 0-.5 2-2 3.500-4 3.500z" fill="#8cc6e6" stroke="none" />
      </Svg>
      <StyledHGap $width={8} />
      <StyledTrayText $width={41} $size={12}>11°C</StyledTrayText>
      <StyledIconButton $width={20} aria-label="Hidden icons">
        <Svg w={12} h={8} color="#fff" sw={1.2}><path d="M1 7l5-5 5 5" /></Svg>
      </StyledIconButton>
      <StyledIconButton $width={24} aria-label="Volume">
        <Svg w={16} h={14} color="#fff">
          <path d="M.5 5v4h2.500l3.500 3.500v-11L3 5zM8.500 4.500c1.200 1.500 1.200 3.500 0 5M10.700 3c2 2.300 2 5.700 0 8M13 1.500c2.800 3.300 2.800 7.700 0 11" />
        </Svg>
      </StyledIconButton>
      <StyledIconButton $width={22} aria-label="Meet now">
        <Svg w={12} h={16} color="#fff">
          <path d="M1.500 4.500h6v7h-6zM7.500 7l3-1.500v5l-3-1.500M2 2.500c2-2 6-2 8 0M2 13.500c2 2 6 2 8 0" />
        </Svg>
      </StyledIconButton>
      <StyledIconButton $width={22} aria-label="Battery">
        <Svg w={16} h={12} color="#fff">
          <path d="M5.500 2.500h9v7h-10V7M15 5h1v2M2 1v2M4 1v2M.5 3h5v2.500h-5zM3 5.500V8" />
          <path d="M6 6h3v3H6z" fill="#fff" />
        </Svg>
      </StyledIconButton>
      <StyledIconButton $width={26} aria-label="Network">
        <Svg w={13} h={13} color="#fff">
          <path d="M1 12C1 5 6 1 12.500 1M4 12.500C4 7.500 7.500 4 12.500 4M7 12.500C7 9 9.500 7 12.500 7" />
          <circle cx="11" cy="11" r="1.500" fill="#fff" />
        </Svg>
      </StyledIconButton>
      <StyledHGap $width={2} />
      <StyledTrayText $width={24} $size={11}>ENG</StyledTrayText>
      <StyledTrayText $width={72} $size={11} $align="center">
        05:10
        <br />
        30-01-2022
      </StyledTrayText>
      <StyledIconButton $width={30} aria-label="Notifications">
        <Svg w={16}>
          <path d="M0 1h16v11h-5l-3 3.500L7 12H0z" fill="#fff" stroke="none" />
          <path d="M3 4.500h10M3 7h10M3 9.500h6" stroke="#1a2743" />
        </Svg>
      </StyledIconButton>
    </StyledTray>
  </StyledTaskbar>
);

//
// --- Side handle, floats over the window edge ---
const StyledSideHandle = styled.button`
  position: fixed;
  z-index: 3;
  top: 497px;
  right: 2px;
  display: flex;
  align-items: center;
  justify-content: center;
  width: 23px;
  height: 60px;
  border: 2px solid #666;
  border-right: 0;
  border-radius: 9px 0 0 9px;
  background: linear-gradient(90deg, #f4f4f4, #b9b9b9);
`;

const SideHandle = () => (
  <StyledSideHandle aria-label="Show panel">
    <Svg w={14} h={36}>
      <path d="M6 2v10L1 7zM13 2v10L8 7z" fill="#444" stroke="none" />
      <path d="M1 20.500h13M1 24.500h13M1 28.500h13M1 32.500h13" stroke="#777" strokeWidth="3" strokeDasharray="3 2" />
    </Svg>
  </StyledSideHandle>
);

const App = () => (
  <StyledApp>
    <GlobalStyle />
    <TitleBar />
    <Menu />
    <Ribbon />
    <FormulaBar />
    <Worksheet />
    <SheetBar />
    <StatusBar />
    <Taskbar />
    <SideHandle />
  </StyledApp>
);

export default App;
